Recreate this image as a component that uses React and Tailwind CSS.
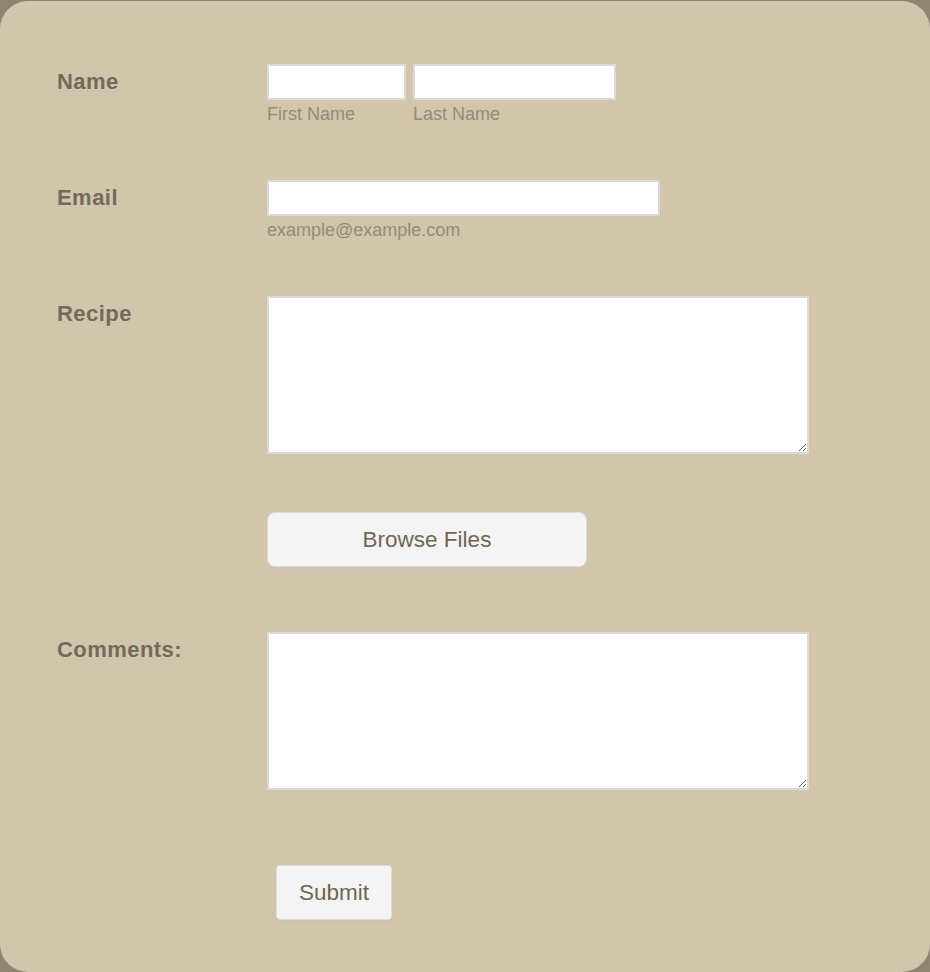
import React from 'react';

const font = { fontFamily: '"Liberation Sans", Arial, sans-serif' };

const Label = ({ children }) => (
  <div className="w-[210px] shrink-0 mt-[5px] text-[22px] font-bold tracking-[0.45px] text-[#746a5a] leading-[25px]">
    {children}
  </div>
);

const Sub = ({ children, className = '' }) => (
  <div className={`mt-[4px] text-[18px] leading-[21px] text-[#958a76] ${className}`}>{children}</div>
);

const inputCls = 'block h-[36px] bg-white border-2 border-[#dadada] outline-none px-2 text-[16px]';
const areaCls = 'block w-[542px] h-[158px] bg-white border-2 border-[#dadada] outline-none p-2 text-[16px] resize';

export default function App() {
  return (
    <div className="min-h-[972px] bg-[#8f8472] pt-px" style={font}>
      <div className="h-[971px] rounded-[28px] bg-[#d1c5ac] pl-[57px] pt-[63px]">
        <div className="flex">
          <Label>Name</Label>
          <div className="flex gap-[7px]">
            <div>
              <input className={`${inputCls} w-[139px]`} />
              <Sub>First Name</Sub>
            </div>
            <div>
              <input className={`${inputCls} w-[203px]`} />
              <Sub>Last Name</Sub>
            </div>
          </div>
        </div>

        <div className="flex mt-[55px]">
          <Label>Email</Label>
          <div>
            <input className={`${inputCls} w-[393px]`} />
            <Sub>example@example.com</Sub>
          </div>
        </div>

        <div className="flex mt-[55px]">
          <Label>Recipe</Label>
          <textarea className={areaCls} />
        </div>

        <div className="flex mt-[58px]">
          <div className="w-[210px] shrink-0" />
          <button className="w-[320px] h-[55px] rounded-[8px] bg-[#f4f4f4] border border-[#dcdcdc] shadow-[0_2px_0_#cbc3b0] text-[22.5px] text-[#6f6552]">
            Browse Files
          </button>
        </div>

        <div className="flex mt-[65px]">
          <Label>Comments:</Label>
          <textarea className={areaCls} />
        </div>

        <div className="flex mt-[75px]">
          <div className="w-[219px] shrink-0" />
          <button className="w-[116px] h-[55px] rounded-[4px] bg-[#f4f4f4] border border-[#dcdcdc] shadow-[0_2px_0_#cbc3b0] text-[22.5px] text-[#6f6552]">
            Submit
          </button>
        </div>
      </div>
    </div>
  );
}
